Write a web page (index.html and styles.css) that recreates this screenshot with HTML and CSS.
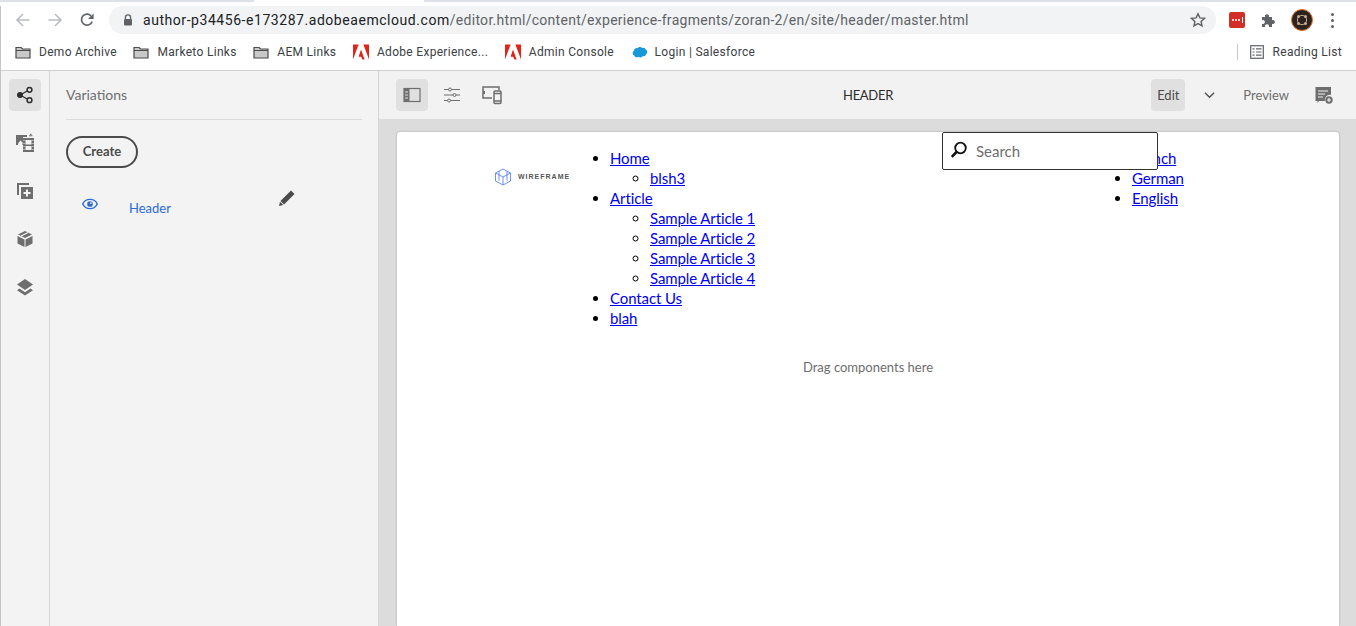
FILE: index.html
```html
<!DOCTYPE html>
<html lang="en">
<head>
<meta charset="utf-8">
<title>AEM Experience Fragment Editor</title>
<link rel="stylesheet" href="styles.css">
</head>
<body>
<svg class="defs" width="0" height="0" aria-hidden="true">
  <symbol id="folder" viewBox="0 0 16 16"><path d="M1 3.5h5l1.5 1.5H15v9H1z" fill="#c9c9c9" stroke="#4a4a4a" stroke-width="1.2"/><path d="M1 6.5h14" stroke="#4a4a4a" stroke-width="1"/></symbol>
  <symbol id="adobe" viewBox="0 0 16 16"><path d="M0 0.5h5.6L0 15.5zM10.4 0.5H16v15zM8 5.5l3.6 10H9.2l-1-2.7H5.6z" fill="#e2231a"/></symbol>
</svg>
<div class="window">
  <div class="tabstrip"><span class="tab-active"></span></div>
  <div class="chrome-row">
    <svg class="nav-ico" viewBox="0 0 16 16"><path d="M14.5 8H2M8 2 2 8l6 6" fill="none" stroke="#b9bcc0" stroke-width="1.6"/></svg>
    <svg class="nav-ico" viewBox="0 0 16 16"><path d="M1.5 8H14M8 2l6 6-6 6" fill="none" stroke="#b9bcc0" stroke-width="1.6"/></svg>
    <svg class="nav-ico" viewBox="0 0 16 16"><path d="M13.2 9.5A5.5 5.5 0 1 1 12 3.9" fill="none" stroke="#5f6368" stroke-width="1.7"/><path d="M14.6 1.5v5.6H9z" fill="#5f6368"/></svg>
    <div class="omnibox">
      <svg class="lock" viewBox="0 0 10 12"><path d="M2.4 5V3.4a2.6 2.6 0 0 1 5.2 0V5" fill="none" stroke="#5f6368" stroke-width="1.3"/><rect x="1" y="5" width="8" height="6.6" rx="1" fill="#5f6368"/></svg>
      <span class="url"><span class="host">author-p34456-e173287.adobeaemcloud.com</span>/editor.html/content/experience-fragments/zoran-2/en/site/header/master.html</span>
      <svg class="star" viewBox="0 0 16 16"><path d="M8 1.8l1.9 4.1 4.5.5-3.3 3 .9 4.4L8 11.6l-4 2.2.9-4.4-3.3-3 4.5-.5z" fill="none" stroke="#5f6368" stroke-width="1.4"/></svg>
    </div>
    <div class="ext-icons">
      <span class="lastpass"><i></i><i></i><i></i><b></b></span>
      <svg class="puzzle" viewBox="0 0 16 16"><path d="M1 5h3.2a2 2 0 1 1 3.6 0H11v3.2a2 2 0 1 1 0 3.6V15H7.8a2 2 0 1 0-3.6 0H1v-3.2a2 2 0 1 0 0-3.6z" fill="#5f6368"/></svg>
      <span class="avatar"><svg viewBox="0 0 16 16"><circle cx="8" cy="8" r="4.6" fill="none" stroke="#c9a98f" stroke-width="1"/><circle cx="4.5" cy="4.500" r="1.500" fill="#c9a98f"/><circle cx="11.500" cy="4.500" r="1.500" fill="#c9a98f"/><circle cx="4.500" cy="11.500" r="1.500" fill="#c9a98f"/><circle cx="11.500" cy="11.500" r="1.500" fill="#c9a98f"/></svg></span>
      <span class="dots"><i></i><i></i><i></i></span>
    </div>
  </div>
  <div class="bookmarks">
    <a class="bm"><svg class="bm-ico"><use href="#folder"/></svg>Demo Archive</a>
    <a class="bm"><svg class="bm-ico"><use href="#folder"/></svg>Marketo Links</a>
    <a class="bm"><svg class="bm-ico"><use href="#folder"/></svg>AEM Links</a>
    <a class="bm"><svg class="bm-ico"><use href="#adobe"/></svg>Adobe Experience...</a>
    <a class="bm"><svg class="bm-ico"><use href="#adobe"/></svg>Admin Console</a>
    <a class="bm"><svg class="bm-ico" viewBox="0 0 16 12"><path d="M6.6 2.2A3 3 0 0 1 11.3 2a2.7 2.7 0 0 1 3.2 1.2 3.1 3.1 0 0 1 .6 5.1 2.6 2.6 0 0 1-3.4 1.6 2.6 2.6 0 0 1-4.2.8 2.8 2.8 0 0 1-4.3-1.2A2.7 2.7 0 0 1 3 4.7a2.7 2.7 0 0 1 3.6-2.5z" fill="#1798d8"/></svg>Login | Salesforce</a>
    <span class="bm-sep"></span>
    <a class="bm"><svg class="bm-ico rl" viewBox="0 0 14 14"><rect x=".7" y=".7" width="12.6" height="12.6" fill="none" stroke="#5f6368" stroke-width="1.2"/><path d="M2.5 3.8h2M6 3.8h5.5M2.5 7h2M6 7h5.5M2.5 10.2h2M6 10.2h5.5" stroke="#5f6368" stroke-width="1.2"/></svg>Reading List</a>
  </div>
  <div class="app">
    <nav class="rail">
      <button class="rail-btn is-on"><svg class="ico" viewBox="0 0 18 18"><path d="M4 9l9-5M4 9l9 5" stroke="#2c2c2c" stroke-width="1.4"/><circle cx="4" cy="9" r="3" fill="#2c2c2c"/><circle cx="13.5" cy="3.8" r="2.4" fill="#e0e0e0" stroke="#2c2c2c" stroke-width="1.5"/><circle cx="13.5" cy="14.2" r="2.4" fill="#e0e0e0" stroke="#2c2c2c" stroke-width="1.5"/></svg></button>
      <button class="rail-btn"><svg class="ico ico-lg" viewBox="0 0 20 20"><path d="M1 2h11v2H8v8H1z" fill="#6e6e6e"/><path d="M3 10.500 5.500 7.500 7.500 9.500v2.500H3z" fill="#f3f3f3"/><path d="M8 5h11v14H8z" fill="#6e6e6e"/><path d="M10.500 7h6v4.500h-6zM10.500 13h6v4h-6z" fill="#f3f3f3"/><path d="M8.500 7h1v1h-1zM8.500 10h1v1h-1zM8.500 13h1v1h-1zM8.500 16h1v1h-1zM17.500 7h1v1h-1zM17.500 10h1v1h-1zM17.500 13h1v1h-1zM17.500 16h1v1h-1z" fill="#f3f3f3"/><path d="M15 2h1.500V.8H15zM14 2.200h3.500v1H14z" fill="#6e6e6e"/></svg></button>
      <button class="rail-btn"><svg class="ico" viewBox="0 0 18 18"><path d="M1 1h12v2H3v10H1z" fill="#6e6e6e"/><path d="M5 5h12v12H5z" fill="#6e6e6e"/><path d="M10 7.500h2V10h2.500v2H12v2.500h-2V12H7.500v-2H10z" fill="#f3f3f3"/></svg></button>
      <button class="rail-btn"><svg class="ico" viewBox="0 0 18 18"><path d="M1.500 6 8.500 9.500V17l-7-3.500zM16.500 6 9.500 9.500V17l7-3.500z" fill="#6e6e6e"/><path d="M9 1 16 4.500 9 8 2 4.500z" fill="#6e6e6e"/><path d="M5 6 12 2.500" stroke="#f3f3f3" stroke-width="1.300"/></svg></button>
      <button class="rail-btn"><svg class="ico" viewBox="0 0 18 18"><path d="M9 1 17 6.500 9 12 1 6.500z" fill="#6e6e6e"/><path d="M3.500 10.500 9 14.300l5.500-3.800 2.500 1.700L9 17.500l-8-5.300z" fill="#6e6e6e"/></svg></button>
    </nav>
    <aside class="panel">
      <h2 class="panel-title">Variations</h2>
      <button class="create">Create</button>
      <div class="variation">
        <svg class="eye" viewBox="0 0 18 12"><path d="M9 .8C5 .8 2 3.400.8 6 2 8.600 5 11.200 9 11.200s7-2.600 8.200-5.200C16 3.400 13 .8 9 .8z" fill="none" stroke="#2c6bd6" stroke-width="1.600"/><circle cx="9" cy="6" r="3.200" fill="#2c6bd6"/><circle cx="10" cy="5" r="1" fill="#f3f3f3"/></svg>
        <a class="var-name">Header</a>
        <svg class="pencil" viewBox="0 0 18 18"><path d="M13 1.500 16.500 5 6 15.500 2.500 12z" fill="#4b4b4b"/><path d="M2 12.800 5.200 16 1 17z" fill="#4b4b4b"/></svg>
      </div>
    </aside>
    <main class="editor">
      <div class="toolbar">
        <div class="tools">
          <button class="tool is-on"><svg class="ico" viewBox="0 0 18 18"><rect x="1" y="2.500" width="16" height="13" fill="none" stroke="#6e6e6e" stroke-width="1.200"/><path d="M1 2.500h5.500v13H1z" fill="#6e6e6e"/><path d="M2 6h3M2 9h3M2 12h3" stroke="#e0e0e0"/></svg></button>
          <button class="tool"><svg class="ico" viewBox="0 0 18 18"><path d="M1 3.500h4.500M8.500 3.500H17M1 9h9M13 9h4M1 14.500h3.500M7.500 14.500H17" stroke="#6e6e6e"/><circle cx="7" cy="3.500" r="1.500" fill="none" stroke="#6e6e6e"/><circle cx="11.500" cy="9" r="1.500" fill="none" stroke="#6e6e6e"/><circle cx="6" cy="14.500" r="1.500" fill="none" stroke="#6e6e6e"/></svg></button>
          <button class="tool"><svg class="ico ico-lg" viewBox="0 0 20 20"><path d="M10 13H1V2h16v3" fill="none" stroke="#6e6e6e" stroke-width="1.500"/><path d="M1 6h2v3H1z" fill="#6e6e6e"/><rect x="12" y="6" width="7" height="12.500" rx="1" fill="none" stroke="#6e6e6e" stroke-width="1.500"/><path d="M12 8.500h7M12 16h7" stroke="#6e6e6e" stroke-width="1.500"/></svg></button>
        </div>
        <div class="doc-title">HEADER</div>
        <div class="actions">
          <button class="act is-on">Edit</button>
          <svg class="chev" viewBox="0 0 12 8"><path d="M1 1.500 6 6.500l5-5" fill="none" stroke="#505050" stroke-width="1.500"/></svg>
          <button class="act">Preview</button>
          <svg class="ico annot" viewBox="0 0 18 18"><path d="M0.500 1h15.500v8a5 5 0 0 0-6 6H4l-1.500 2V15H.5z" fill="#6e6e6e"/><path d="M3 5h10M3 8h7M3 11h5" stroke="#f2f2f2"/><circle cx="14" cy="14" r="3.700" fill="#6e6e6e"/><path d="M14 12v4M12 14h4" stroke="#f2f2f2" stroke-width="1.200"/></svg>
        </div>
      </div>
      <div class="canvas">
        <div class="page">
          <div class="site-header">
            <div class="logo">
              <svg class="logo-mark" viewBox="0 0 18 18"><path d="M9 1 16.500 5v8L9 17 1.500 13V5zM1.500 5 9 9l7.500-4M9 9v8M5 3.200v9.500M13 3.200v9.500" fill="none" stroke="#4a73ff" stroke-width=".8"/></svg>
              <span class="logo-text">WIREFRAME</span>
            </div>
            <ul class="menu">
              <li><a href="#">Home</a>
                <ul><li><a href="#">blsh3</a></li></ul>
              </li>
              <li><a href="#">Article</a>
                <ul>
                  <li><a href="#">Sample Article 1</a></li>
                  <li><a href="#">Sample Article 2</a></li>
                  <li><a href="#">Sample Article 3</a></li>
                  <li><a href="#">Sample Article 4</a></li>
                </ul>
              </li>
              <li><a href="#">Contact Us</a></li>
              <li><a href="#">blah</a></li>
            </ul>
            <ul class="menu langs">
              <li><a href="#">French</a></li>
              <li><a href="#">German</a></li>
              <li><a href="#">English</a></li>
            </ul>
          </div>
          <div class="dropzone">Drag components here</div>
          <div class="search">
            <svg class="search-ico" viewBox="0 0 18 18"><circle cx="10.500" cy="7" r="5.300" fill="none" stroke="#111" stroke-width="1.800"/><path d="M6.500 11 1.800 15.800" stroke="#111" stroke-width="2.600"/></svg>
            <span>Search</span>
          </div>
        </div>
      </div>
    </main>
  </div>
</div>
</body>
</html>
```

FILE: styles.css
```css
* { box-sizing: border-box; }
html, body { margin: 0; height: 100%; overflow: hidden; background: #fff; }
.defs { position: absolute; }
button { font: inherit; color: inherit; border: 0; background: none; padding: 0; display: flex; align-items: center; justify-content: center; }
svg { display: block; flex: none; }

.window { height: 626px; display: flex; flex-direction: column; border-left: 1px solid #c4c4c4; font-family: "Lato", sans-serif; }

.tabstrip { height: 6px; margin-left: -1px; background: linear-gradient(#dee1e6 2px, #fff 2px); position: relative; }
.tab-active { position: absolute; left: 254px; width: 170px; top: 0; height: 2px; background: #fff; }

.chrome-row { height: 28px; display: flex; align-items: center; padding-left: 14px; font-family: "Roboto", sans-serif; }
.nav-ico { width: 16px; height: 16px; margin-right: 16px; }
.nav-ico:nth-child(3) { margin-right: 14px; }
.omnibox { width: 1107px; height: 28px; background: #f1f3f4; border-radius: 14px; display: flex; align-items: center; padding: 0 10px 0 14px; }
.lock { width: 10px; height: 12px; margin-right: 10px; }
.url { font-size: 14px; color: #5f6368; white-space: nowrap; flex: 1; letter-spacing: .28px; }
.host { color: #202124; letter-spacing: .55px; }
.star { width: 16px; height: 16px; }
.ext-icons { display: flex; align-items: center; margin-left: 13px; }
.lastpass { width: 16px; height: 16px; background: #d32d27; border-radius: 2px; display: flex; align-items: center; justify-content: center; gap: 1px; margin-right: 16px; }
.lastpass i { width: 2px; height: 2px; border-radius: 50%; background: #fff; }
.lastpass b { width: 1px; height: 6px; background: #fff; margin-left: 1px; }
.puzzle { width: 16px; height: 16px; margin-right: 14px; }
.avatar { width: 22px; height: 22px; border-radius: 50%; background: #2b2320; border: 1.500px solid #e8701f; margin-right: 18px; display: flex; align-items: center; justify-content: center; }
.avatar svg { width: 16px; height: 16px; }
.dots { display: flex; flex-direction: column; gap: 3px; }
.dots i { width: 3px; height: 3px; border-radius: 50%; background: #5f6368; }

.bookmarks { height: 37px; border-bottom: 1px solid #cfcfcf; display: flex; align-items: center; padding-left: 14px; gap: 16.600px; font-family: "Roboto", sans-serif; font-size: 12px; color: #3c4043; letter-spacing: .3px; padding-bottom: 1px; }
.bm { display: flex; align-items: center; gap: 8px; white-space: nowrap; }
.bm-ico { width: 16px; height: 16px; }
.rl { width: 14px; height: 14px; margin-right: 1px; }
.bm-sep { width: 1px; height: 16px; background: #c8c8c8; margin-left: auto; margin-right: -5px; }
.bm:last-child { margin-right: 14px; }

.app { flex: 1; display: flex; min-height: 0; }
.rail { width: 49px; background: #f3f3f3; border-right: 1px solid #d6d6d6; padding: 8px 0 0 8px; display: flex; flex-direction: column; gap: 16px; }
.rail-btn { width: 32px; height: 32px; border-radius: 4px; }
.rail-btn.is-on, .tool.is-on, .act.is-on { background: #e0e0e0; }
.ico { width: 18px; height: 18px; }
.ico-lg { width: 20px; height: 20px; }

.panel { width: 329px; background: #f3f3f3; border-right: 1px solid #d6d6d6; padding: 0 16px; }
.panel-title { margin: 0; height: 49px; border-bottom: 1px solid #dcdcdc; font-size: 14px; font-weight: 400; color: #6e6e6e; line-height: 48px; }
.create { width: 72px; height: 32px; margin-top: 16px; border: 2px solid #4b4b4b; border-radius: 16px; font-size: 13px; font-weight: 700; color: #4b4b4b; padding-bottom: 2px; }
.variation { display: flex; align-items: flex-start; margin-top: 30px; padding-left: 16px; color: #2c6bd6; font-size: 13px; }
.eye { width: 16px; height: 12px; margin-right: 31px; }
.var-name { flex: 1; line-height: 16px; margin-top: 2px; }
.pencil { width: 18px; height: 18px; margin: -9px 66px 0 0; }

.editor { flex: 1; min-width: 0; display: flex; flex-direction: column; }
.toolbar { height: 48px; background: #f2f2f2; display: grid; grid-template-columns: 1fr auto 1fr; align-items: center; padding: 0 16px 0 17px; }
.tools { display: flex; gap: 8px; }
.tool { width: 32px; height: 32px; border-radius: 4px; }
.doc-title { font-size: 13px; letter-spacing: -.3px; color: #2c2c2c; }
.actions { display: flex; align-items: center; justify-content: flex-end; font-size: 13px; color: #6e6e6e; }
.act { height: 32px; padding: 0 6px; border-radius: 4px; }
.act.is-on { width: 34px; padding: 0; color: #4b4b4b; }
.chev { width: 11px; height: 8px; margin: 0 22px 0 19px; }
.annot { margin-left: 20px; margin-right: 7px; }

.canvas { flex: 1; min-height: 0; background: #dcdcdc; padding: 13px 17px 0 18px; }
.page { height: 100%; background: #fff; border-radius: 3px 3px 0 0; box-shadow: 0 0 2px rgba(0,0,0,.3); position: relative; font-size: 15px; letter-spacing: -.1px; line-height: 20px; color: #000; }
.site-header { display: flex; padding-top: 16px; }
.logo { width: 76px; margin: 20px 0 0 97px; display: flex; align-items: center; gap: 6px; height: 18px; }
.logo-mark { width: 18px; height: 18px; }
.logo-text { font-family: "Liberation Sans", sans-serif; font-size: 7px; font-weight: 700; letter-spacing: 1px; color: #555; }
.menu, .menu ul { margin: 0; padding-left: 40px; }
.menu { flex: 1; }
.menu a { color: #0000ee; }
.langs { flex: 0 0 247px; }
.dropzone { margin-top: 29px; text-align: center; font-size: 13px; letter-spacing: 0; color: #6e6e6e; line-height: 20px; }
.search { position: absolute; left: 545px; top: 0; width: 216px; height: 38px; background: #fff; border: 1px solid #333; border-radius: 2px; display: flex; align-items: center; padding-left: 7px; gap: 8px; color: #6e6e6e; font-size: 15px; letter-spacing: 0; }
.search-ico { width: 18px; height: 18px; margin-top: -3px; }
```
